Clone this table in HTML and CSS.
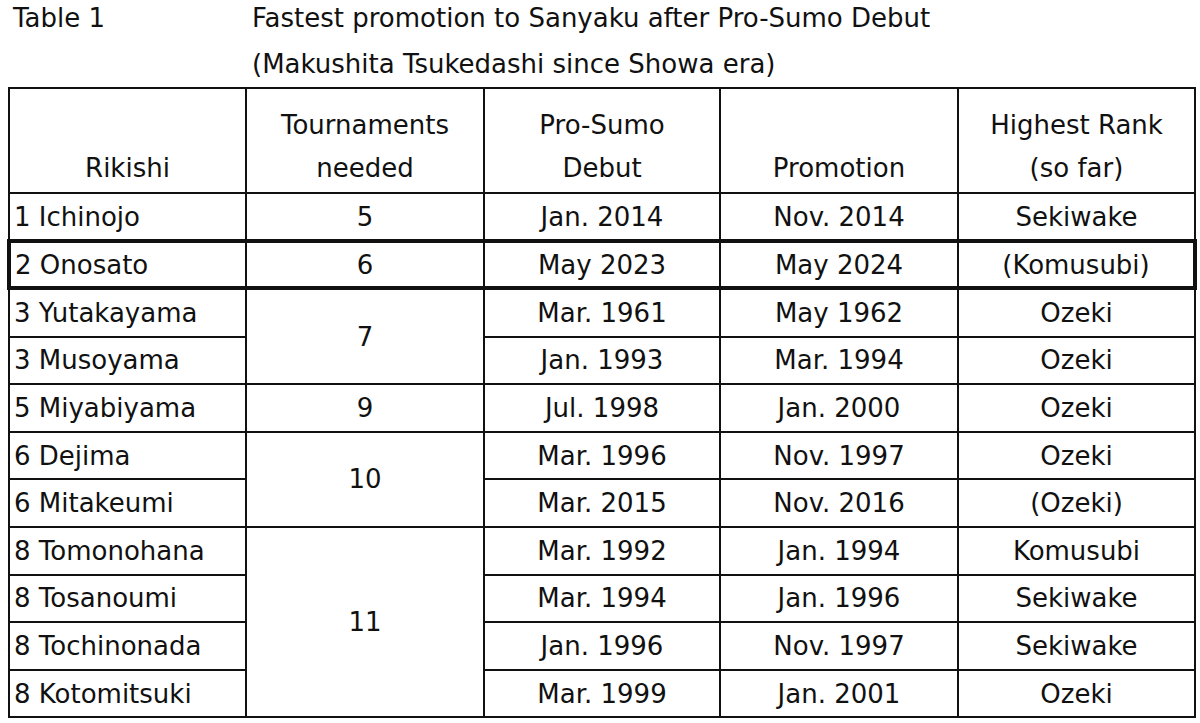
FILE: index.html
```html
<!DOCTYPE html>
<html>
<head>
<meta charset="utf-8">
<link rel="stylesheet" href="styles.css">
</head>
<body>
<div class="page">
  <div class="title">
    <div class="label">Table 1</div>
    <div class="caption">
      <div>Fastest promotion to Sanyaku after Pro-Sumo Debut</div>
      <div>(Makushita Tsukedashi since Showa era)</div>
    </div>
  </div>
  <table class="tbl">
    <colgroup>
      <col class="c1"><col class="c2"><col class="c3"><col class="c4"><col class="c5">
    </colgroup>
    <thead>
      <tr class="head">
        <th>Rikishi</th>
        <th>Tournaments<br>needed</th>
        <th>Pro-Sumo<br>Debut</th>
        <th>Promotion</th>
        <th>Highest Rank<br>(so far)</th>
      </tr>
    </thead>
    <tbody>
      <tr class="r1"><td class="name">1 Ichinojo</td><td>5</td><td>Jan. 2014</td><td>Nov. 2014</td><td>Sekiwake</td></tr>
      <tr class="hl"><td class="name">2 Onosato</td><td>6</td><td>May 2023</td><td>May 2024</td><td>(Komusubi)</td></tr>
      <tr><td class="name">3 Yutakayama</td><td rowspan="2">7</td><td>Mar. 1961</td><td>May 1962</td><td>Ozeki</td></tr>
      <tr><td class="name">3 Musoyama</td><td>Jan. 1993</td><td>Mar. 1994</td><td>Ozeki</td></tr>
      <tr><td class="name">5 Miyabiyama</td><td>9</td><td>Jul. 1998</td><td>Jan. 2000</td><td>Ozeki</td></tr>
      <tr><td class="name">6 Dejima</td><td rowspan="2">10</td><td>Mar. 1996</td><td>Nov. 1997</td><td>Ozeki</td></tr>
      <tr><td class="name">6 Mitakeumi</td><td>Mar. 2015</td><td>Nov. 2016</td><td>(Ozeki)</td></tr>
      <tr><td class="name">8 Tomonohana</td><td rowspan="4">11</td><td>Mar. 1992</td><td>Jan. 1994</td><td>Komusubi</td></tr>
      <tr><td class="name">8 Tosanoumi</td><td>Mar. 1994</td><td>Jan. 1996</td><td>Sekiwake</td></tr>
      <tr><td class="name">8 Tochinonada</td><td>Jan. 1996</td><td>Nov. 1997</td><td>Sekiwake</td></tr>
      <tr><td class="name">8 Kotomitsuki</td><td>Mar. 1999</td><td>Jan. 2001</td><td>Ozeki</td></tr>
    </tbody>
  </table>
</div>
</body>
</html>
```
FILE: styles.css
```css
html, body {
  margin: 0;
  padding: 0;
  background: #fff;
}
body {
  font-family: "DejaVu Sans", Verdana, sans-serif;
  font-size: 26px;
  color: #111;
}
.page {
  padding-left: 7px;
}
.title {
  display: flex;
  line-height: 46px;
  margin-top: -5px;
}
.label {
  width: 239px;
  padding-left: 6px;
}
.tbl {
  border-collapse: collapse;
  width: 1186px;
  table-layout: fixed;
}
.c1 { width: 237px; }
.c2 { width: 238px; }
.c3 { width: 236px; }
.c4 { width: 238px; }
.c5 { width: 237px; }
.tbl th, .tbl td {
  border: 2px solid #111;
  padding: 0;
  text-align: center;
}
.tbl th {
  font-weight: normal;
  vertical-align: bottom;
  line-height: 43px;
  height: 101px;
  padding-bottom: 2px;
}
.tbl td {
  height: 45.6px;
  line-height: 40px;
  vertical-align: middle;
}
.tbl .r1 td {
  height: 45px;
}
.tbl td.name {
  text-align: left;
  padding-left: 4px;
}
.tbl .hl td {
  height: 43px;
  border-top: 4px solid #111;
  border-bottom: 4px solid #111;
}
.tbl .hl td:first-child {
  border-left: 4px solid #111;
}
.tbl .hl td:last-child {
  border-right: 4px solid #111;
}
```
